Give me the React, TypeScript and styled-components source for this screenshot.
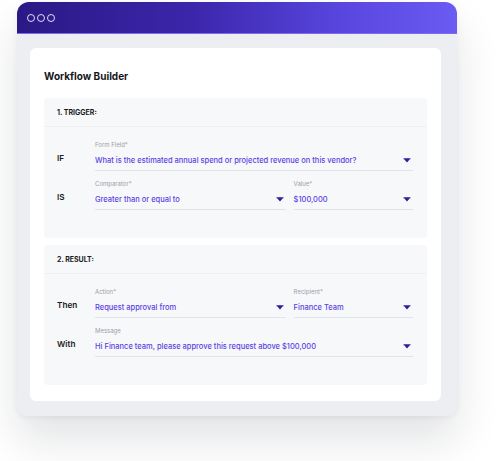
import React from 'react';
import styled, { createGlobalStyle } from 'styled-components';

const GlobalStyle = createGlobalStyle`
  html, body {
    margin: 0;
    padding: 0;
    background: #fff;
  }
  body {
    font-family: Inter, "Noto Sans", sans-serif;
    -webkit-font-smoothing: antialiased;
  }
`;

const Page = styled.div`
  width: 500px;
  height: 461px;
  padding: 2px 0 0 17px;
  box-sizing: border-box;
`;

const Window = styled.div`
  width: 440px;
  height: 414px;
  border-radius: 12px 12px 10px 10px;
  background: #eceef1;
  box-shadow: 0 24px 44px rgba(20, 24, 40, 0.12), 0 2px 6px rgba(20, 24, 40, 0.05);
  display: flex;
  flex-direction: column;
  overflow: hidden;
`;

const TitleBar = styled.div`
  height: 32px;
  flex-shrink: 0;
  display: flex;
  align-items: center;
  gap: 1px;
  padding-left: 10px;
  background: linear-gradient(90deg, #2a1985 0%, #3b26ab 40%, #5a47e0 75%, #6a5bf2 100%);
  border-bottom: 1px solid #7a6cf0;
  box-sizing: border-box;
`;

const Dot = styled.span`
  width: 6px;
  height: 6px;
  border-radius: 50%;
  border: 1px solid rgba(255, 255, 255, 0.85);
  margin-right: 1px;
`;

const Body = styled.div`
  flex: 1;
  padding: 14px 16px 18px 13px;
  display: flex;
`;

const Card = styled.div`
  flex: 1;
  background: #fff;
  border-radius: 6px;
  padding: 20px 14px 16px 14px;
  display: flex;
  flex-direction: column;
`;

const Title = styled.h1`
  margin: 0 0 14px;
  font-size: 10px;
  line-height: 16px;
  font-weight: 700;
  color: #15161a;
`;

const Section = styled.section<{ $grow?: boolean }>`
  background: #f7f8fa;
  border-radius: 4px;
  display: flex;
  flex-direction: column;
  & + & {
    margin-top: 7px;
  }
  ${(p) => (p.$grow ? 'flex: 1;' : '')}
`;

const SectionHeader = styled.div`
  height: 29px;
  display: flex;
  align-items: center;
  padding-left: 13px;
  border-bottom: 1px solid #eef0f3;
  font-size: 7px;
  font-weight: 700;
  color: #1a1b20;
  box-sizing: border-box;
`;

const SectionBody = styled.div`
  padding: 12px 14px 28px 13px;
  display: flex;
  flex-direction: column;
  gap: 7px;
`;

const Row = styled.div`
  display: flex;
  align-items: center;
`;

const RowLabel = styled.div`
  width: 38px;
  flex-shrink: 0;
  font-size: 8.2px;
  font-weight: 600;
  color: #1a1b20;
  padding-top: 6px;
`;

const Fields = styled.div<{ $split?: boolean }>`
  flex: 1;
  display: grid;
  grid-template-columns: ${(p) => (p.$split ? '190fr 119fr' : '1fr')};
  column-gap: 8px;
`;

const Field = styled.div`
  display: flex;
  flex-direction: column;
  border-bottom: 1px solid #e2e4e9;
  padding-bottom: 3px;
`;

const FieldLabel = styled.div`
  font-size: 6px;
  line-height: 11px;
  color: #9b9ea6;
`;

const FieldValue = styled.div`
  margin-top: 3px;
  height: 14px;
  display: flex;
  align-items: center;
  justify-content: space-between;
  font-size: 7.5px;
  font-weight: 500;
  color: #5b3fe4;
  white-space: nowrap;
`;

const Caret = () => (
  <svg width="8" height="5" viewBox="0 0 8 5" style={{ marginRight: 2, flexShrink: 0 }}>
    <path d="M0.5 0.3h7v1H6.8L4 4.5 1.2 1.3H0.5z" fill="#2b1d9c" />
  </svg>
);

function SelectField({ label, value }: { label: string; value: string }) {
  return (
    <Field>
      <FieldLabel>{label}</FieldLabel>
      <FieldValue>
        <span>{value}</span>
        <Caret />
      </FieldValue>
    </Field>
  );
}

export default function App() {
  return (
    <>
      <GlobalStyle />
      <Page>
        <Window>
          <TitleBar>
            <Dot />
            <Dot />
            <Dot />
          </TitleBar>
          <Body>
            <Card>
              <Title>Workflow Builder</Title>
              <Section>
                <SectionHeader>1. TRIGGER:</SectionHeader>
                <SectionBody>
                  <Row>
                    <RowLabel>IF</RowLabel>
                    <Fields>
                      <SelectField
                        label="Form Field*"
                        value="What is the estimated annual spend or projected revenue on this vendor?"
                      />
                    </Fields>
                  </Row>
                  <Row>
                    <RowLabel>IS</RowLabel>
                    <Fields $split>
                      <SelectField label="Comparator*" value="Greater than or equal to" />
                      <SelectField label="Value*" value="$100,000" />
                    </Fields>
                  </Row>
                </SectionBody>
              </Section>
              <Section $grow>
                <SectionHeader>2. RESULT:</SectionHeader>
                <SectionBody>
                  <Row>
                    <RowLabel>Then</RowLabel>
                    <Fields $split>
                      <SelectField label="Action*" value="Request approval from" />
                      <SelectField label="Recipient*" value="Finance Team" />
                    </Fields>
                  </Row>
                  <Row>
                    <RowLabel>With</RowLabel>
                    <Fields>
                      <SelectField
                        label="Message"
                        value="Hi Finance team, please approve this request above $100,000"
                      />
                    </Fields>
                  </Row>
                </SectionBody>
              </Section>
            </Card>
          </Body>
        </Window>
      </Page>
    </>
  );
}
